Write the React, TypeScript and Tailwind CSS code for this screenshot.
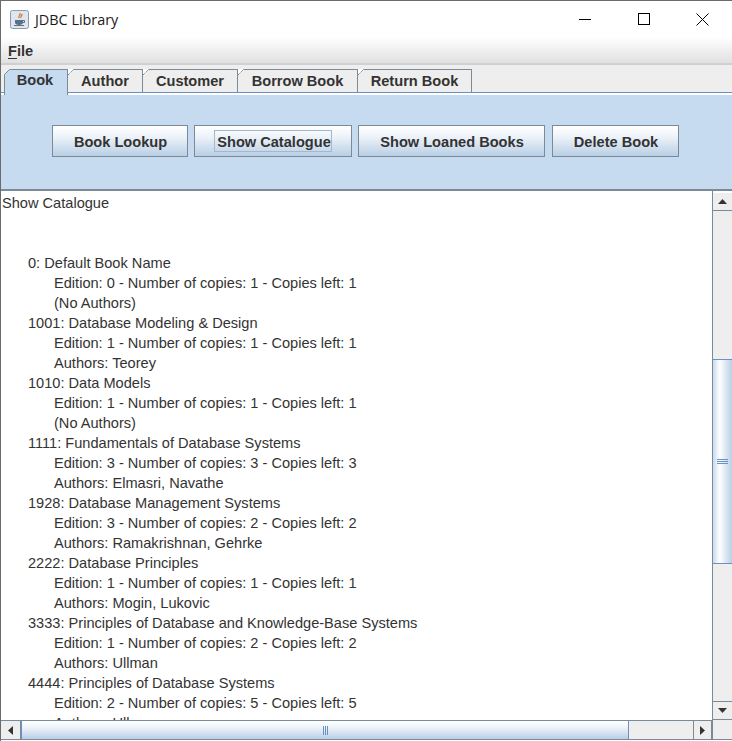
import React from "react";

const lines: [number, string][] = [
  [0, "Show Catalogue"],
  [0, ""],
  [0, ""],
  [1, "0: Default Book Name"],
  [2, "Edition: 0 - Number of copies: 1 - Copies left: 1"],
  [2, "(No Authors)"],
  [1, "1001: Database Modeling & Design"],
  [2, "Edition: 1 - Number of copies: 1 - Copies left: 1"],
  [2, "Authors: Teorey"],
  [1, "1010: Data Models"],
  [2, "Edition: 1 - Number of copies: 1 - Copies left: 1"],
  [2, "(No Authors)"],
  [1, "1111: Fundamentals of Database Systems"],
  [2, "Edition: 3 - Number of copies: 3 - Copies left: 3"],
  [2, "Authors: Elmasri, Navathe"],
  [1, "1928: Database Management Systems"],
  [2, "Edition: 3 - Number of copies: 2 - Copies left: 2"],
  [2, "Authors: Ramakrishnan, Gehrke"],
  [1, "2222: Database Principles"],
  [2, "Edition: 1 - Number of copies: 1 - Copies left: 1"],
  [2, "Authors: Mogin, Lukovic"],
  [1, "3333: Principles of Database and Knowledge-Base Systems"],
  [2, "Edition: 1 - Number of copies: 2 - Copies left: 2"],
  [2, "Authors: Ullman"],
  [1, "4444: Principles of Database Systems"],
  [2, "Edition: 2 - Number of copies: 5 - Copies left: 5"],
  [2, "Authors: Ullman"],
];

const tabs = [
  { label: "Book", w: "w-[64px]" },
  { label: "Author", w: "w-[75px]" },
  { label: "Customer", w: "w-[95px]" },
  { label: "Borrow Book", w: "w-[120px]" },
  { label: "Return Book", w: "w-[114px]" },
];

function Btn({ label, w, focus, ml }: { label: string; w: string; focus?: boolean; ml: string }) {
  return (
    <div className={`${w} ${ml} h-[32px] shrink-0 flex items-center justify-center border border-[#7a8a99] bg-[linear-gradient(180deg,#ffffff_0%,#eef3f9_35%,#b8cfe5_100%)] text-[14.6px] font-bold text-[#333333]`}>
      {focus ? (
        <span className="h-[22px] border border-[#a3b8cc] pl-[2px] pr-0 leading-[22px]">{label}</span>
      ) : (
        <span className="pt-[3px] pl-[1px]">{label}</span>
      )}
    </div>
  );
}

function Arrow({ dir }: { dir: "up" | "down" | "left" | "right" }) {
  const pts = {
    up: "1,8 5.5,3 10,8",
    down: "1,3 5.5,8 10,3",
    left: "8,1 3,5.5 8,10",
    right: "3,1 8,5.5 3,10",
  }[dir];
  return (
    <svg width="11" height="11" viewBox="0 0 11 11">
      <polygon points={pts} fill="#333333" />
    </svg>
  );
}

export default function App() {
  return (
    <div className="w-[732px] h-[741px] overflow-hidden flex flex-col bg-white border-t border-l border-[#6b6b6b] font-['Liberation_Sans',Arial,sans-serif] text-[#333333]">
      {/* Title bar */}
      <div className="h-[36px] shrink-0 flex items-center bg-white">
        <svg className="ml-[9px]" width="19" height="19" viewBox="0 0 19 19">
          <rect x="0.5" y="0.5" width="18" height="18" rx="2" fill="#dfe6ee" stroke="#8b9bb0" />
          <path d="M10 3c1 2-2 3-1 5M12 4c0 2-2 3-1 4" stroke="#d9772a" strokeWidth="1.3" fill="none" />
          <path d="M5 10h8v2.5c0 1.5-1.5 2.5-4 2.5s-4-1-4-2.5z" fill="#5a7088" />
          <path d="M13 10.5h1.5v2H13" stroke="#5a7088" fill="none" />
          <path d="M4 15.5h10" stroke="#5a7088" />
        </svg>
        <span className="ml-[6px] pt-[2px] text-[14.4px] text-[#1a1a1a] font-['Open_Sans',sans-serif]">JDBC Library</span>
        <div className="ml-auto flex items-center h-full">
          <div className="w-[58px] flex justify-center">
            <div className="w-[12px] h-px bg-black" />
          </div>
          <div className="w-[59px] flex justify-center">
            <div className="w-[12px] h-[12px] border border-black" />
          </div>
          <div className="w-[59px] flex justify-center">
            <svg width="13" height="13" viewBox="0 0 13 13">
              <path d="M0.5 0.5L12.5 12.5M12.5 0.5L0.5 12.5" stroke="#000" strokeWidth="1" />
            </svg>
          </div>
        </div>
      </div>
      {/* Menu bar */}
      <div className="h-[28px] shrink-0 flex items-center pl-[7px] pt-[4px] bg-[linear-gradient(180deg,#ffffff_0%,#e0e0e0_100%)] border-b-2 border-[#d0d0d0] text-[14.6px] font-bold">
        <span><span className="underline underline-offset-2">F</span>ile</span>
      </div>
      {/* Tabs */}
      <div className="h-[27px] shrink-0 flex items-start pt-[4px] pl-[3px] bg-[#eeeeee]">
        {tabs.map((t, i) => (
          <div
            key={t.label}
            className={`${t.w} relative shrink-0 flex items-center justify-center border-t border-r border-[#7a8a99] text-[14.6px] font-bold ${i === 0 ? "h-[26px] pb-[3px] pr-[2px] z-10 border-l bg-[#c6daf0]" : "h-[23px] pt-[1px] bg-[#eeeeee]"}`}
          >
            {t.label}
            {i === 0 ? (
              <svg className="absolute -left-px -top-px" width="6" height="6" viewBox="0 0 6 6">
                <polygon points="0,0 6,0 0,6" fill="#eeeeee" />
                <path d="M0.5 5.5L5.5 0.5" stroke="#7a8a99" />
              </svg>
            ) : (
              <svg className="absolute left-0 -top-px" width="6" height="6" viewBox="0 0 6 6">
                <polygon points="0,0 6,0 0,6" fill="#ffffff" />
                <path d="M0 6L6 0" stroke="#7a8a99" strokeDasharray="1.4 0.6" />
              </svg>
            )}
          </div>
        ))}
      </div>
      <div className="h-px shrink-0 bg-[#6d8fc8]" />
      <div className="h-[2px] shrink-0 bg-white" />
      {/* Buttons panel */}
      <div className="h-[96px] shrink-0 flex items-start pl-[51px] pt-[30px] bg-[#c6daf0] border-b-2 border-[#7a8a99]">
        <Btn label="Book Lookup" w="w-[136px]" ml="ml-0" />
        <Btn label="Show Catalogue" w="w-[158px]" ml="ml-[6px]" focus />
        <Btn label="Show Loaned Books" w="w-[187px]" ml="ml-[6px]" />
        <Btn label="Delete Book" w="w-[127px]" ml="ml-[7px]" />
      </div>
      {/* Scroll area */}
      <div className="flex-1 flex min-h-0">
        <div className="flex-1 flex flex-col min-w-0">
          <div className="flex-1 min-h-0 overflow-hidden pl-[1px] pt-[2px] text-[14.6px] leading-[20px] text-[#333333]">
            {lines.map(([lvl, text], i) => (
              <div key={i} className={`h-[20px] whitespace-pre ${lvl === 1 ? "pl-[26px]" : lvl === 2 ? "pl-[52px]" : ""}`}>
                {text}
              </div>
            ))}
          </div>
          {/* Horizontal scrollbar */}
          <div className="h-[19px] shrink-0 flex bg-[#eeeeee] border-t border-[#7a8a99]">
            <div className="w-[20px] shrink-0 flex items-center justify-center border-r border-[#7a8a99]">
              <Arrow dir="left" />
            </div>
            <div className="w-[608px] shrink-0 flex items-center justify-center border-x border-[#6d8fc8] bg-[linear-gradient(180deg,#ffffff_0%,#eef3f9_35%,#b8cfe5_100%)]">
              <div className="w-[5px] h-[9px] border-x border-[#6d8fc8] flex justify-center">
                <div className="w-px h-full bg-[#6d8fc8]" />
              </div>
            </div>
            <div className="flex-1" />
            <div className="w-[19px] shrink-0 flex items-center justify-center border-x border-[#7a8a99]">
              <Arrow dir="right" />
            </div>
          </div>
        </div>
        {/* Vertical scrollbar */}
        <div className="w-[20px] shrink-0 flex flex-col bg-[#eeeeee] border-l border-[#7a8a99]">
          <div className="h-[20px] shrink-0 flex items-center justify-center border-b border-[#7a8a99] border-t-2 border-t-white">
            <Arrow dir="up" />
          </div>
          <div className="h-[148px] shrink-0" />
          <div className="h-[205px] shrink-0 flex items-center justify-center border-y border-[#6d8fc8] bg-[linear-gradient(90deg,#c9d9ec_0%,#ffffff_35%,#b8cfe5_100%)]">
            <div className="w-[11px] h-[5px] border-y border-[#6d8fc8] flex items-center">
              <div className="w-full h-px bg-[#6d8fc8]" />
            </div>
          </div>
          <div className="flex-1" />
          <div className="h-[19px] shrink-0 flex items-center justify-center border-y border-[#7a8a99]">
            <Arrow dir="down" />
          </div>
          <div className="h-[19px] shrink-0" />
        </div>
      </div>
      <div className="h-px shrink-0 bg-[#7a8a99]" />
      <div className="h-px shrink-0 bg-white" />
    </div>
  );
}
